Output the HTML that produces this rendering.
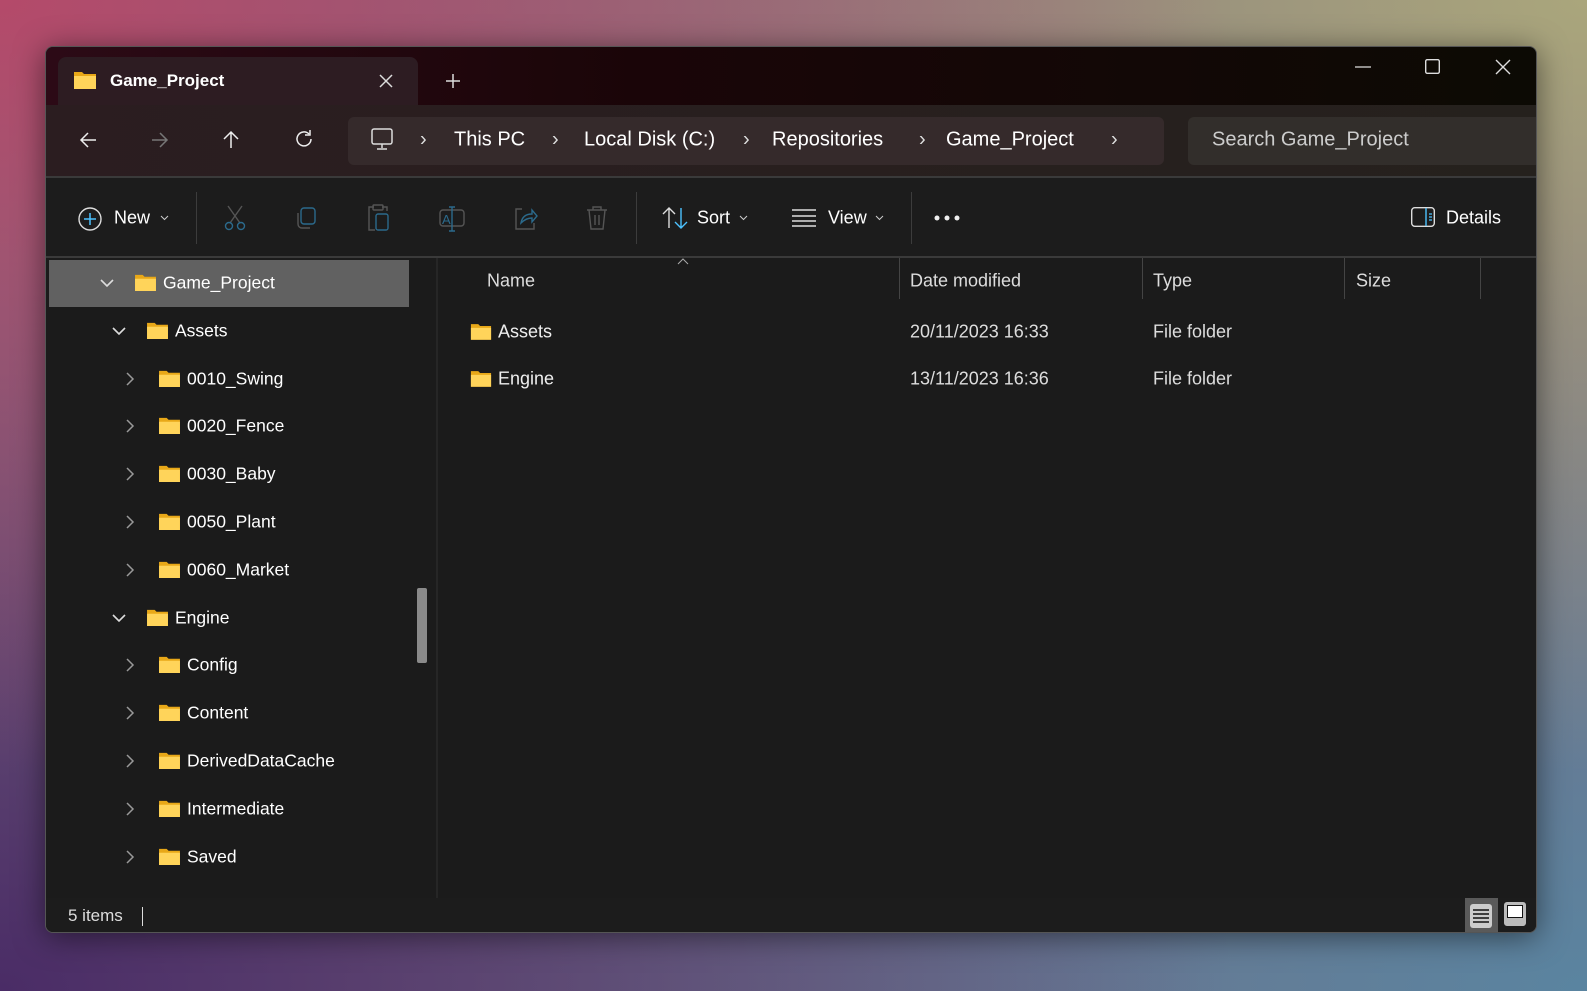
<!DOCTYPE html>
<html><head><meta charset="utf-8"><style>
*{margin:0;padding:0;box-sizing:border-box}
body{width:1587px;height:991px;overflow:hidden;position:relative;font-family:"Liberation Sans",sans-serif;
background:radial-gradient(ellipse at 0% 0%,#b44a6a 0%,transparent 55%),radial-gradient(ellipse at 100% 0%,#aaa67c 0%,transparent 55%),radial-gradient(ellipse at 0% 100%,#4a2c66 0%,transparent 55%),radial-gradient(ellipse at 100% 100%,#5a84a0 0%,transparent 55%),#7a6a80;}
.win{position:absolute;left:45px;top:46px;width:1492px;height:887px;border-radius:8px;overflow:hidden;background:#1b1b1b;box-shadow:0 4px 30px rgba(0,0,0,.5);border:1px solid #555}
.abs{position:absolute}
.t{position:absolute;color:#fff;white-space:nowrap;transform:translateY(-50%)}
.title{left:0;top:0;width:100%;height:58px;background:linear-gradient(90deg,#2c0a16,#1a0508 40%,#0c0a04)}
.tab{left:12px;top:10px;width:360px;height:48px;background:#2d1c22;border-radius:8px 8px 0 0}
.nav{left:0;top:58px;width:100%;height:71px;background:linear-gradient(90deg,#2b1d20,#25211d)}
.addr{left:302px;top:12px;width:816px;height:48px;background:#352a2b;border-radius:6px}
.search{left:1142px;top:12px;width:360px;height:48px;background:#322e2b;border-radius:6px}
.tb{left:0;top:129px;width:100%;height:82px;background:#1c1c1c;border-top:2px solid #3a3a3a;border-bottom:2px solid #3a3a3a}
.sep{position:absolute;width:1px;background:#3c3c3c}
svg{position:absolute;overflow:visible}
.f18{font-size:18px}
.tr{font-size:17.5px}
.status{left:0;top:851px;width:100%;height:36px;background:#1c1c1c}
</style></head><body>
<div class="win">
 <div class="abs title"></div>
 <div class="abs tab"></div>
 <svg style="left:27px;top:23px" width="24" height="20" viewBox="0 0 24 20"><path d="M1 2h8l2 2h12v15H1z" fill="#e8a818"/><path d="M1 6h22v13H1z" fill="#ffd45a"/></svg>
 <div class="t" style="left:64px;top:34px;font-size:17px;font-weight:bold">Game_Project</div>
 <svg style="left:333px;top:27px" width="14" height="14"><path d="M1 1L13 13M13 1L1 13" stroke="#ddd" stroke-width="1.5"/></svg>
 <svg style="left:399px;top:26px" width="16" height="16"><path d="M8 1v14M1 8h14" stroke="#ddd" stroke-width="1.5"/></svg>
 <svg style="left:1309px;top:19px" width="16" height="2"><path d="M0 1h16" stroke="#ddd" stroke-width="1.3"/></svg>
 <svg style="left:1379px;top:12px" width="15" height="15"><rect x=".7" y=".7" width="13.6" height="13.6" rx="1.5" fill="none" stroke="#ddd" stroke-width="1.4"/></svg>
 <svg style="left:1449px;top:12px" width="16" height="16"><path d="M1 1L15 15M15 1L1 15" stroke="#ddd" stroke-width="1.4"/></svg>

 <div class="abs nav">
  <div class="abs addr"></div><div class="abs search"></div>
 </div>
 <svg style="left:33px;top:84px" width="18" height="18"><path d="M17 9H2M9 2L2 9l7 7" stroke="#eee" stroke-width="1.5" fill="none"/></svg>
 <svg style="left:105px;top:84px" width="18" height="18"><path d="M1 9h15M9 2l7 7-7 7" stroke="#777" stroke-width="1.5" fill="none"/></svg>
 <svg style="left:176px;top:83px" width="18" height="19"><path d="M9 18V2M2 9l7-7 7 7" stroke="#eee" stroke-width="1.5" fill="none"/></svg>
 <svg style="left:249px;top:83px" width="18" height="18"><path d="M14 4A7 7 0 1 0 16 9" stroke="#eee" stroke-width="1.5" fill="none"/><path d="M15 0v5h-5" stroke="#eee" stroke-width="1.5" fill="none"/></svg>
 <svg style="left:325px;top:81px" width="22" height="22"><rect x="1" y="1" width="20" height="15" rx="2" fill="none" stroke="#ddd" stroke-width="1.5"/><path d="M11 16v4M6 21h10" stroke="#ddd" stroke-width="1.5"/></svg>
 <div class="t" style="left:374px;top:93px;font-size:20px;color:#ddd">›</div>
 <div class="t" style="left:408px;top:93px;font-size:20px">This PC</div>
 <div class="t" style="left:506px;top:93px;font-size:20px;color:#ddd">›</div>
 <div class="t" style="left:538px;top:93px;font-size:20px">Local Disk (C:)</div>
 <div class="t" style="left:697px;top:93px;font-size:20px;color:#ddd">›</div>
 <div class="t" style="left:726px;top:93px;font-size:20px">Repositories</div>
 <div class="t" style="left:873px;top:93px;font-size:20px;color:#ddd">›</div>
 <div class="t" style="left:900px;top:93px;font-size:20px">Game_Project</div>
 <div class="t" style="left:1065px;top:93px;font-size:20px;color:#ddd">›</div>
 <div class="t" style="left:1166px;top:93px;font-size:20px;color:#ccc">Search Game_Project</div>

 <div class="abs tb"></div>
 <svg style="left:32px;top:160px" width="24" height="24"><circle cx="12" cy="12" r="11" fill="none" stroke="#ddd" stroke-width="1.4"/><path d="M12 6v12M6 12h12" stroke="#4cc2ff" stroke-width="1.5"/></svg>
 <div class="t f18" style="left:68px;top:171px">New</div>
 <svg style="left:114px;top:168px" width="9" height="6"><path d="M1 1l3.5 3.5L8 1" stroke="#ccc" fill="none"/></svg>
 <div class="sep" style="left:150px;top:145px;height:52px"></div>
 <svg style="left:178px;top:158px" width="22" height="26"><path d="M4 1l12 17M18 1L6 18" stroke="#555" stroke-width="1.4"/><circle cx="5" cy="21" r="3.5" fill="none" stroke="#2b6a8c" stroke-width="1.4"/><circle cx="17" cy="21" r="3.5" fill="none" stroke="#2b6a8c" stroke-width="1.4"/></svg>
 <svg style="left:249px;top:160px" width="22" height="22"><rect x="6" y="1" width="14" height="16" rx="3" fill="none" stroke="#2b6a8c" stroke-width="1.4"/><path d="M3 6v11a4 4 0 0 0 4 4h8" stroke="#555" stroke-width="1.4" fill="none"/></svg>
 <svg style="left:320px;top:157px" width="24" height="28"><path d="M8 3H3v23h6M16 3h5v4" stroke="#555" stroke-width="1.4" fill="none"/><rect x="7" y="1" width="10" height="5" rx="1" fill="none" stroke="#555" stroke-width="1.4"/><rect x="10" y="10" width="12" height="16" rx="2" fill="none" stroke="#2b6a8c" stroke-width="1.4"/></svg>
 <svg style="left:393px;top:159px" width="26" height="26"><rect x="1" y="4" width="24" height="16" rx="3" fill="none" stroke="#555" stroke-width="1.4"/><path d="M13 1v24M10 1h6M10 25h6" stroke="#2b6a8c" stroke-width="1.4"/><text x="3" y="18" font-size="13" fill="#2b6a8c" font-family="Liberation Sans">A</text></svg>
 <svg style="left:467px;top:160px" width="24" height="24"><path d="M9 2H3v20h18v-6" stroke="#555" stroke-width="1.4" fill="none"/><path d="M8 16c1-6 5-9 11-9V3l5 6-5 6v-4c-5 0-8 2-11 5z" stroke="#2b6a8c" stroke-width="1.4" fill="none"/></svg>
 <svg style="left:540px;top:158px" width="22" height="26"><path d="M1 5h20M7 5V2h8v3M3 5l2 19h12l2-19M9 10v10M13 10v10" stroke="#555" stroke-width="1.4" fill="none"/></svg>
 <div class="sep" style="left:590px;top:145px;height:52px"></div>
 <svg style="left:616px;top:159px" width="26" height="24"><path d="M7 22V2M1 8l6-6 6 6" stroke="#ddd" stroke-width="1.4" fill="none"/><path d="M19 2v20M13 16l6 6 6-6" stroke="#4cc2ff" stroke-width="1.4" fill="none"/></svg>
 <div class="t f18" style="left:651px;top:171px">Sort</div>
 <svg style="left:693px;top:168px" width="9" height="6"><path d="M1 1l3.5 3.5L8 1" stroke="#ccc" fill="none"/></svg>
 <svg style="left:746px;top:162px" width="24" height="18"><path d="M0 1h24M0 7h24M0 12h24M0 17h24" stroke="#ddd" stroke-width="1.4"/></svg>
 <div class="t f18" style="left:782px;top:171px">View</div>
 <svg style="left:829px;top:168px" width="9" height="6"><path d="M1 1l3.5 3.5L8 1" stroke="#ccc" fill="none"/></svg>
 <div class="sep" style="left:865px;top:145px;height:52px"></div>
 <svg style="left:888px;top:168px" width="26" height="6"><circle cx="3" cy="3" r="2.5" fill="#eee"/><circle cx="13" cy="3" r="2.5" fill="#eee"/><circle cx="23" cy="3" r="2.5" fill="#eee"/></svg>
 <svg style="left:1365px;top:160px" width="24" height="20"><rect x=".7" y=".7" width="22.6" height="18.6" rx="3" fill="none" stroke="#ddd" stroke-width="1.4"/><path d="M15 1v18" stroke="#4cc2ff" stroke-width="1.4"/><path d="M18 7h3M18 10h3M18 13h3" stroke="#4cc2ff" stroke-width="1.2"/></svg>
 <div class="t f18" style="left:1400px;top:171px">Details</div>

 <div class="abs" style="left:3px;top:213px;width:360px;height:47px;background:#616161"></div>
 <div class="abs" style="left:390px;top:211px;width:2px;height:640px;background:#262626"></div>
 <div class="abs" style="left:371px;top:541px;width:10px;height:75px;background:#8a8a8a;border-radius:2px"></div>
 <div id="tree"></div>

 <svg style="left:631px;top:211px" width="12" height="7"><path d="M1 6l5-5 5 5" stroke="#aaa" fill="none"/></svg>
 <div class="t f18" style="left:441px;top:234px;color:#ddd">Name</div>
 <div class="sep" style="left:853px;top:211px;height:41px;background:#444"></div>
 <div class="t f18" style="left:864px;top:234px;color:#ddd">Date modified</div>
 <div class="sep" style="left:1096px;top:211px;height:41px;background:#444"></div>
 <div class="t f18" style="left:1107px;top:234px;color:#ddd">Type</div>
 <div class="sep" style="left:1298px;top:211px;height:41px;background:#444"></div>
 <div class="t f18" style="left:1310px;top:234px;color:#ddd">Size</div>
 <div class="sep" style="left:1434px;top:211px;height:41px;background:#444"></div>

 <svg style="left:424px;top:275px" width="22" height="19" viewBox="0 0 24 20"><path d="M1 2h8l2 2h12v15H1z" fill="#e8a818"/><path d="M1 6h22v13H1z" fill="#ffd45a"/></svg>
 <div class="t f18" style="left:452px;top:285px;color:#eee">Assets</div>
 <div class="t f18" style="left:864px;top:285px;color:#ddd">20/11/2023 16:33</div>
 <div class="t f18" style="left:1107px;top:285px;color:#ddd">File folder</div>
 <svg style="left:424px;top:322px" width="22" height="19" viewBox="0 0 24 20"><path d="M1 2h8l2 2h12v15H1z" fill="#e8a818"/><path d="M1 6h22v13H1z" fill="#ffd45a"/></svg>
 <div class="t f18" style="left:452px;top:332px;color:#eee">Engine</div>
 <div class="t f18" style="left:864px;top:332px;color:#ddd">13/11/2023 16:36</div>
 <div class="t f18" style="left:1107px;top:332px;color:#ddd">File folder</div>

 <div class="abs status"></div>
 <div class="t" style="left:22px;top:869px;font-size:17px;color:#ddd">5 items</div>
 <div class="abs" style="left:96px;top:860px;width:1px;height:19px;background:#ddd"></div>
 <div class="abs" style="left:1419px;top:851px;width:33px;height:36px;background:#5a5a5a"></div>
 <div class="abs" style="left:1424px;top:857px;width:22px;height:24px;background:#ccc;border-radius:3px"></div>
 <svg style="left:1427px;top:861px" width="16" height="16"><path d="M0 2h16M0 6h16M0 10h16M0 14h16" stroke="#111" stroke-width="1.5"/></svg>
 <div class="abs" style="left:1458px;top:855px;width:22px;height:24px;background:#bbb;border-radius:3px"></div>
 <div class="abs" style="left:1461px;top:858px;width:16px;height:13px;background:#fff;border:1px solid #111"></div>
</div>
<script>
var rows=[[0,"Game_Project","d"],[1,"Assets","d"],[2,"0010_Swing","r"],[2,"0020_Fence","r"],[2,"0030_Baby","r"],[2,"0050_Plant","r"],[2,"0060_Market","r"],[1,"Engine","d"],[2,"Config","r"],[2,"Content","r"],[2,"DerivedDataCache","r"],[2,"Intermediate","r"],[2,"Saved","r"]];
var h="";rows.forEach(function(r,i){var y=236+i*47.8;var x=12*r[0];
var ch=r[2]=="d"?'<svg style="left:'+(54+x)+'px;top:'+(y-4)+'px" width="14" height="9"><path d="M1 1l6 6 6-6" stroke="#ddd" stroke-width="1.6" fill="none"/></svg>':'<svg style="left:'+(80+x-24)+'px;top:'+(y-7)+'px" width="9" height="14"><path d="M1 1l6 6-6 6" stroke="#999" stroke-width="1.5" fill="none"/></svg>';
h+=ch+'<svg style="left:'+(88+x)+'px;top:'+(y-10)+'px" width="23" height="19" viewBox="0 0 24 20"><path d="M1 2h8l2 2h12v15H1z" fill="#e8a818"/><path d="M1 6h22v13H1z" fill="#ffd45a"/></svg><div class="t tr" style="left:'+(117+x)+'px;top:'+y+'px">'+r[1]+'</div>';});
document.getElementById("tree").outerHTML=h;
</script>
</body></html>
